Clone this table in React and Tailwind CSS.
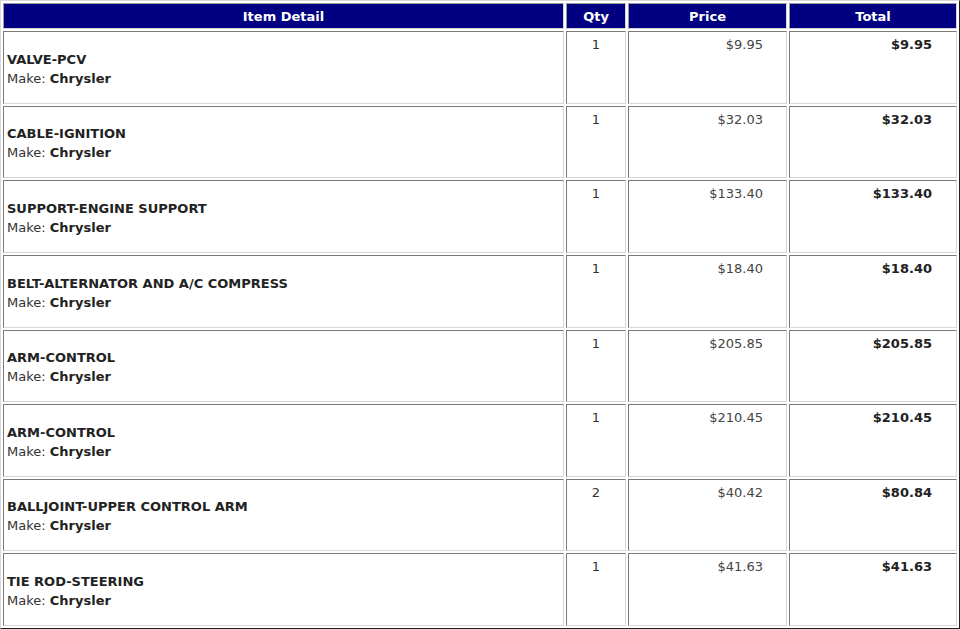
import React from 'react';

const items = [
    { name: 'VALVE-PCV', qty: 1, price: '$9.95', total: '$9.95', h: 'h-[73px]' },
    { name: 'CABLE-IGNITION', qty: 1, price: '$32.03', total: '$32.03', h: 'h-[72px]' },
    { name: 'SUPPORT-ENGINE SUPPORT', qty: 1, price: '$133.40', total: '$133.40', h: 'h-[73px]' },
    { name: 'BELT-ALTERNATOR AND A/C COMPRESS', qty: 1, price: '$18.40', total: '$18.40', h: 'h-[73px]' },
    { name: 'ARM-CONTROL', qty: 1, price: '$205.85', total: '$205.85', h: 'h-[72px]' },
    { name: 'ARM-CONTROL', qty: 1, price: '$210.45', total: '$210.45', h: 'h-[73px]' },
    { name: 'BALLJOINT-UPPER CONTROL ARM', qty: 2, price: '$40.42', total: '$80.84', h: 'h-[72px]' },
    { name: 'TIE ROD-STEERING', qty: 1, price: '$41.63', total: '$41.63', h: 'h-[73px]' },
];

const cell =
    'border border-solid border-t-[#7a7a7a] border-l-[#7a7a7a] border-b-[#d8d8d8] border-r-[#d8d8d8] p-[3px]';
const head =
    'h-[26px] bg-[#000080] text-white font-bold text-center align-middle border border-solid border-t-[#9a9a9a] border-l-[#9a9a9a] border-b-[#d8d8d8] border-r-[#d8d8d8] p-0';

export default function App() {
    return (
        <div className="bg-white w-[960px] h-[629px] font-['DejaVu_Sans',Verdana,sans-serif] text-[13px] leading-[19px] text-[#333]">
            <table className="w-[960px] table-fixed border-separate border-spacing-[2px] border border-solid border-t-[#d8d8d8] border-l-[#d8d8d8] border-b-[#222] border-r-[#222]">
                <colgroup>
                    <col className="w-[561px]" />
                    <col className="w-[60px]" />
                    <col className="w-[159px]" />
                    <col className="w-[168px]" />
                </colgroup>
                <thead>
                    <tr>
                        <th className={head}>Item Detail</th>
                        <th className={head}>Qty</th>
                        <th className={head}>Price</th>
                        <th className={head}>Total</th>
                    </tr>
                </thead>
                <tbody>
                    {items.map((item, i) => (
                        <tr key={i} className={item.h}>
                            <td className={`${cell} pt-[5px] pb-[3px] align-middle text-left`}>
                                <div className="font-bold text-[#222]">{item.name}</div>
                                <div>
                                    Make: <span className="font-bold text-[#222]">Chrysler</span>
                                </div>
                            </td>
                            <td className={`${cell} align-top text-center`}>{item.qty}</td>
                            <td className={`${cell} align-top text-right pr-[23px] text-[#444]`}>{item.price}</td>
                            <td className={`${cell} align-top text-right pr-[24px] font-bold text-[#222]`}>{item.total}</td>
                        </tr>
                    ))}
                </tbody>
            </table>
        </div>
    );
}
